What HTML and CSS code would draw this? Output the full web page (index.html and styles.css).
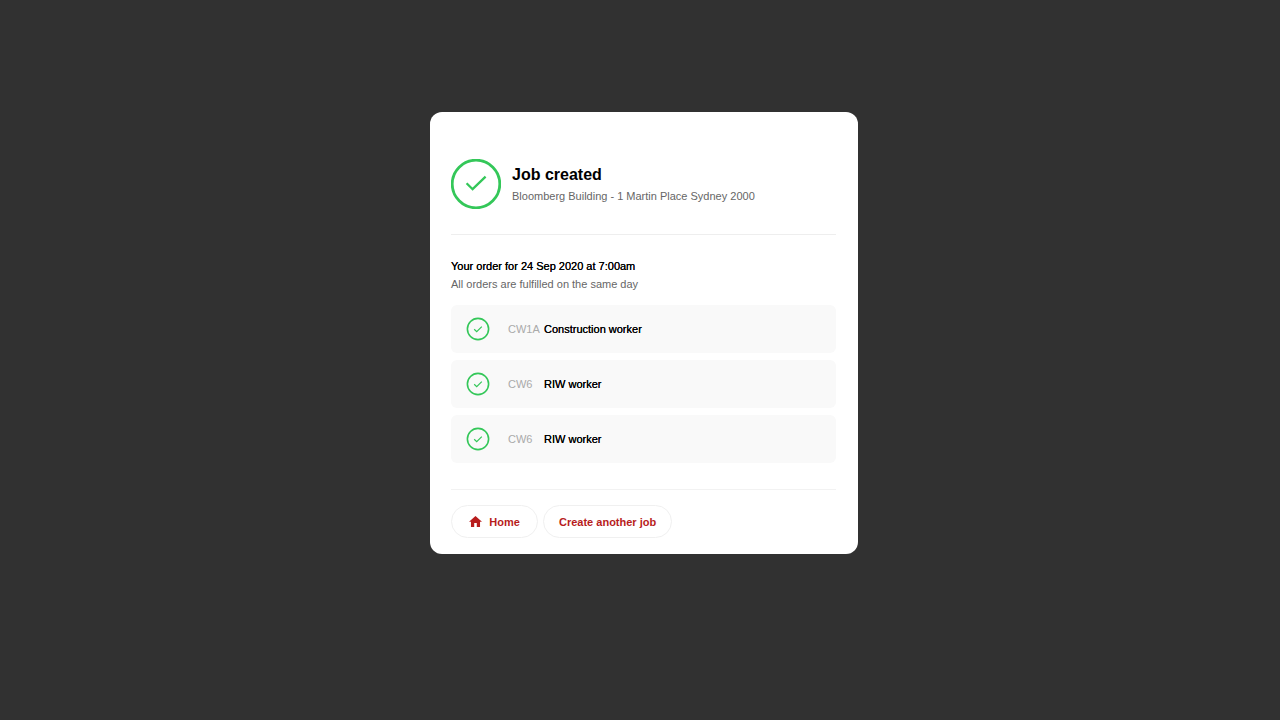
FILE: index.html
```html
<!DOCTYPE html>
<html lang="en">
<head>
    <meta charset="UTF-8">
    <meta name="viewport" content="width=device-width, initial-scale=1.0">
    <title>Job created</title>
    <link rel="stylesheet" href="styles.css">
</head>
<body>
    <svg class="sprite" aria-hidden="true">
        <symbol id="check-large" viewBox="0 0 50 50">
            <circle cx="25" cy="25" r="23.8" fill="none" stroke="#34c759" stroke-width="2.8"/>
            <path d="M15.6 24.2l6 6L34.6 17.6" fill="none" stroke="#34c759" stroke-width="2.3"/>
        </symbol>
        <symbol id="check-small" viewBox="0 0 24 24">
            <circle cx="12" cy="12" r="10.6" fill="none" stroke="#34c759" stroke-width="1.6"/>
            <path d="M8.2 12.2l2.5 2.4L15.8 9.6" fill="none" stroke="#34c759" stroke-width="1.2"/>
        </symbol>
    </svg>
    <main class="card">
        <header class="header">
            <svg class="check-large"><use href="#check-large"/></svg>
            <div>
                <h1>Job created</h1>
                <p class="address">Bloomberg Building - 1 Martin Place Sydney 2000</p>
            </div>
        </header>
        <section class="order">
            <h2>Your order for 24 Sep 2020 at 7:00am</h2>
            <p class="note">All orders are fulfilled on the same day</p>
            <ul class="workers">
                <li class="worker">
                    <svg class="check-small"><use href="#check-small"/></svg>
                    <span class="code">CW1A</span>
                    <span class="name">Construction worker</span>
                </li>
                <li class="worker">
                    <svg class="check-small"><use href="#check-small"/></svg>
                    <span class="code">CW6</span>
                    <span class="name">RIW worker</span>
                </li>
                <li class="worker">
                    <svg class="check-small"><use href="#check-small"/></svg>
                    <span class="code">CW6</span>
                    <span class="name">RIW worker</span>
                </li>
            </ul>
        </section>
        <footer class="actions">
            <button type="button" class="btn btn-home">
                <svg class="home" viewBox="2 3 20 17"><path d="M10 20v-6h4v6h5v-8h3L12 3 2 12h3v8z" fill="#b71c1c"/></svg>
                Home
            </button>
            <button type="button" class="btn">Create another job</button>
        </footer>
    </main>
</body>
</html>
```
FILE: styles.css
```css
* {
    box-sizing: border-box;
}
body {
    font-family: "Liberation Sans", Arial, sans-serif;
    font-size: 11px;
    line-height: 18px;
    margin: 0;
    padding: 112px 0 40px 8px;
    background-color: #313131;
    color: #000;
}
h1, h2, p, ul {
    margin: 0;
    padding: 0;
}
.sprite {
    display: none;
}
.card {
    max-width: 428px;
    margin: 0 auto;
    padding: 47px 22px 16px 21px;
    background-color: #fff;
    border-radius: 12px;
}
.header {
    display: flex;
    align-items: center;
    gap: 11px;
    padding-bottom: 25px;
    border-bottom: 1px solid #eee;
}
.check-large {
    width: 50px;
    height: 50px;
    overflow: visible;
}
h1 {
    font-size: 16px;
    line-height: 24px;
}
.address,
.note {
    color: #666;
}
.order {
    padding: 22px 0 26px;
    border-bottom: 1px solid #f2f2f2;
}
h2 {
    font-size: 11px;
    font-weight: normal;
    line-height: 18px;
}
/* medium weight */
h2,
.name {
    text-shadow: 0 0 0 #000;
}
.workers {
    display: flex;
    flex-direction: column;
    gap: 7px;
    margin-top: 12px;
    list-style: none;
}
.worker {
    display: flex;
    align-items: center;
    height: 48px;
    padding: 0 15px;
    background-color: #f9f9f9;
    border-radius: 6px;
}
.check-small {
    width: 24px;
    height: 24px;
    margin-right: 18px;
}
.code {
    width: 36px;
    color: #aaa;
}
.actions {
    display: flex;
    gap: 5px;
    padding-top: 15px;
}
.btn {
    display: flex;
    align-items: center;
    justify-content: center;
    gap: 7px;
    height: 33px;
    padding: 0 15px;
    border: 1px solid #f0f0f0;
    border-radius: 17px;
    background-color: #fff;
    color: #b71c1c;
    font: bold 11px "Liberation Sans", Arial, sans-serif;
    cursor: pointer;
}
.btn-home {
    min-width: 87px;
}
.home {
    width: 13px;
    height: 11px;
}
```
